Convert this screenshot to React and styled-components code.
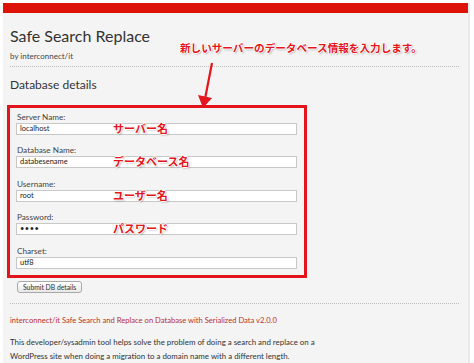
import React from 'react';
import styled, { createGlobalStyle } from 'styled-components';

const GlobalStyle = createGlobalStyle`
  html, body {
    margin: 0;
    padding: 0;
    background: #fff;
  }
  body {
    font-family: Lato, "Open Sans", "Noto Sans CJK JP", sans-serif;
    color: #333;
  }
`;

const Page = styled.div`
  width: 474px;
  height: 363px;
  overflow: hidden;
  padding: 3px 4px 0 3px;
  box-sizing: border-box;
`;

const Panel = styled.div`
  position: relative;
  background: #f4f4f4;
  border-right: 2px solid #e9e9e9;
  height: 400px;
`;

const TopBar = styled.div`
  height: 10px;
  background: #dd1308;
`;

const Content = styled.div`
  padding: 0 7px;
`;

const Title = styled.h1`
  margin: 13px 0 0;
  font-size: 16px;
  line-height: 20px;
  font-weight: 400;
  color: #333;
`;

const Byline = styled.div`
  margin-top: 4px;
  font-size: 8px;
  line-height: 12px;
  color: #444;
`;

const Divider = styled.hr`
  border: 0;
  border-top: 1px dotted #bdbdbd;
  margin: ${(p) => p.$top || 4}px 2px 0 0;
`;

const SectionTitle = styled.h2`
  margin: 10px 0 0;
  font-size: 12px;
  line-height: 16px;
  font-weight: 400;
  color: #333;
`;

const FormBox = styled.div`
  margin: 12px 0 0 -3px;
  width: 300px;
  box-sizing: border-box;
  border: 3px solid #e3141c;
  padding: 3px 7px 6px 6px;
`;

const Field = styled.div`
  display: flex;
  flex-direction: column;
  margin-bottom: 9.4px;

  &:last-child {
    margin-bottom: 0;
  }
`;

const Label = styled.label`
  font-size: 8.2px;
  line-height: 12px;
  color: #444;
  padding-left: 1px;
`;

const Input = styled.div`
  height: 12px;
  box-sizing: border-box;
  border: 1px solid #c8c8c8;
  background: #fff;
  font-size: 7.5px;
  line-height: 10px;
  padding-left: 3px;
  color: #222;
  letter-spacing: ${(p) => (p.$password ? '0.5px' : '0')};
`;

const Button = styled.div`
  display: block;
  width: fit-content;
  margin: 3px 0 0 7px;
  height: 12px;
  box-sizing: border-box;
  padding: 0 5px;
  border: 1px solid #a9a9a9;
  border-radius: 3px;
  background: linear-gradient(#ffffff, #e8e8e8);
  font-size: 6.8px;
  line-height: 10px;
  color: #333;
`;

const LinkLine = styled.div`
  margin-top: 10px;
  font-size: 7.6px;
  line-height: 12px;
  color: #b8302c;
`;

const Para = styled.p`
  margin: 9px 0 0;
  font-size: 7.9px;
  line-height: 14px;
  color: #333;
`;

const Note = styled.div`
  position: absolute;
  left: ${(p) => p.$x}px;
  top: ${(p) => p.$y}px;
  font-family: "Noto Sans CJK JP", sans-serif;
  font-weight: 700;
  font-size: ${(p) => p.$size || 11}px;
  line-height: 1;
  white-space: nowrap;
  color: #e2161c;
  text-shadow: -1px 0 #fff, 1px 0 #fff, 0 -1px #fff, 0 1px #fff,
    1px 1px 2px rgba(0, 0, 0, 0.45);
`;

const Arrow = styled.svg`
  position: absolute;
  left: 190px;
  top: 58px;
`;

const fields = [
  { label: 'Server Name:', value: 'localhost' },
  { label: 'Database Name:', value: 'databesename' },
  { label: 'Username:', value: 'root' },
  { label: 'Password:', value: '\u2022\u2022\u2022\u2022', password: true },
  { label: 'Charset:', value: 'utf8' },
];

const notes = [
  { text: 'サーバー名', y: 120 },
  { text: 'データベース名', y: 153 },
  { text: 'ユーザー名', y: 187 },
  { text: 'パスワード', y: 220 },
];

const App = () => (
  <Page>
    <GlobalStyle />
    <Panel>
      <TopBar />
      <Content>
        <Title>Safe Search Replace</Title>
        <Byline>by interconnect/it</Byline>
        <Divider $top={4} />
        <SectionTitle>Database details</SectionTitle>
        <FormBox>
          {fields.map((f) => (
            <Field key={f.label}>
              <Label>{f.label}</Label>
              <Input $password={f.password}>{f.value}</Input>
            </Field>
          ))}
        </FormBox>
        <Button>Submit DB details</Button>
        <Divider $top={10} />
        <LinkLine>
          interconnect/it Safe Search and Replace on Database with Serialized Data v2.0.0
        </LinkLine>
        <Para>
          This developer/sysadmin tool helps solve the problem of doing a search and replace on a
          <br />
          WordPress site when doing a migration to a domain name with a different length.
        </Para>
      </Content>

      <Note $x={177} $y={40} $size={10.6}>
        新しいサーバーのデータベース情報を入力します。
      </Note>
      <Arrow width="30" height="50" viewBox="0 0 30 50">
        <line x1="19" y1="2" x2="12" y2="38" stroke="#e2161c" strokeWidth="2.2" />
        <polygon points="5,34 19,37 10,47" fill="#e2161c" />
      </Arrow>
      {notes.map((n) => (
        <Note key={n.text} $x={110} $y={n.y}>
          {n.text}
        </Note>
      ))}
    </Panel>
  </Page>
);

export default App;
